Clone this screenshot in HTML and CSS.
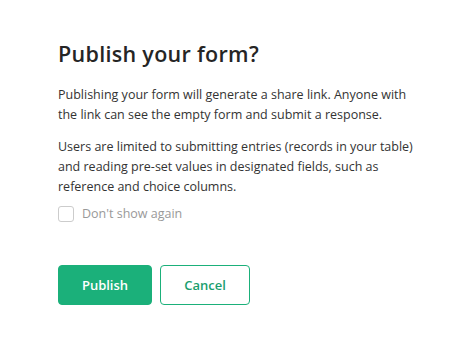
FILE: index.html
```
<!DOCTYPE html>
<html>
<head>
<meta charset="utf-8">
<link rel="stylesheet" href="styles.css">
</head>
<body>
<div class="dialog">
  <h1 class="title">Publish your form?</h1>
  <p class="text">Publishing your form will generate a share link. Anyone with the link can see the empty form and submit a response.</p>
  <p class="text">Users are limited to submitting entries (records in your table) and reading pre-set values in designated fields, such as reference and choice columns.</p>
  <label class="check">
    <span class="box"></span>
    <span class="check-label">Don't show again</span>
  </label>
  <div class="actions">
    <button class="btn btn-primary">Publish</button>
    <button class="btn btn-secondary">Cancel</button>
  </div>
</div>
</body>
</html>
```
FILE: styles.css
```
html, body {
  margin: 0;
  padding: 0;
  background: #ffffff;
}
body {
  font-family: "Open Sans", "Noto Sans", sans-serif;
  color: #333333;
}
.dialog {
  width: 358px;
  padding: 38px 0 0 58px;
  display: flex;
  flex-direction: column;
}
.title {
  margin: 0 0 16px 0;
  font-size: 21.5px;
  font-weight: 600;
  letter-spacing: 0.3px;
  line-height: 31px;
  color: #252525;
}
.text {
  margin: 0 0 12px 0;
  font-size: 12.5px;
  line-height: 20px;
}
.check {
  display: flex;
  align-items: center;
  gap: 8px;
  margin-top: -4px;
}
.box {
  width: 14px;
  height: 14px;
  border: 1px solid #cccccc;
  border-radius: 3px;
  background: #fff;
}
.check-label {
  font-size: 12.5px;
  color: #999999;
}
.actions {
  display: flex;
  gap: 8px;
  margin-top: 43px;
}
.btn {
  height: 40px;
  border-radius: 4px;
  font-family: inherit;
  font-size: 13px;
  font-weight: 600;
  padding: 0;
}
.btn-primary {
  width: 94px;
  background: #1bb07a;
  border: 1px solid #1bb07a;
  color: #ffffff;
}
.btn-secondary {
  width: 90px;
  background: #ffffff;
  border: 1px solid #1bb07a;
  color: #1a9e6e;
}
```
